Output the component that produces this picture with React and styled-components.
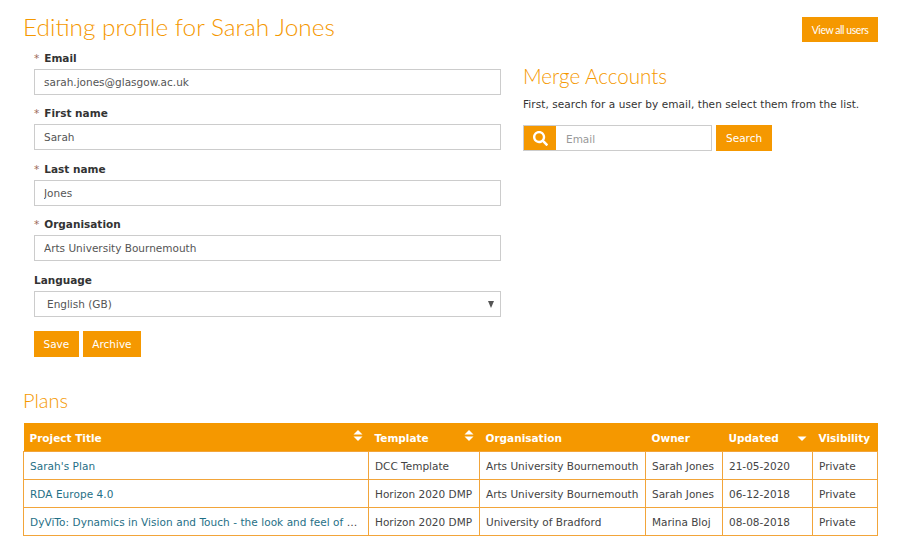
import React from 'react'
import styled, { createGlobalStyle } from 'styled-components'
import { FaSearch } from 'react-icons/fa'

const orange = '#f59800'

const GlobalStyle = createGlobalStyle`
  html, body {
    margin: 0;
    padding: 0;
    background: #fff;
  }
  body {
    font-family: "DejaVu Sans", Verdana, sans-serif;
    font-size: 10.5px;
    color: #333;
  }
`

const Page = styled.div`
  width: 855px;
  padding: 11px 0 0 23px;
`

const TopBar = styled.div`
  display: flex;
  justify-content: space-between;
  align-items: flex-start;
  height: 37px;
`

const Title = styled.h1`
  margin: 0;
  font-family: Lato, sans-serif;
  font-weight: 300;
  font-size: 24.4px;
  line-height: 32px;
  color: ${orange};
`

const Button = styled.button`
  height: 26px;
  padding: 0 10px;
  border: 0;
  background: ${orange};
  color: #fff;
  font-family: inherit;
  font-size: 10.5px;
`

const FormButton = styled(Button)`
  padding: 0 9.5px;
`

const ViewAll = styled(Button)`
  margin-top: 6px;
  width: 76px;
  height: 25px;
  padding: 0;
  font-family: Lato, sans-serif;
  font-weight: 400;
  font-size: 10.5px;
  letter-spacing: -0.45px;
`

const Columns = styled.div`
  display: grid;
  grid-template-columns: 478px 1fr;
  column-gap: 11px;
  padding-left: 11px;
`

const Form = styled.form`
  display: flex;
  flex-direction: column;
`

const Field = styled.div`
  height: 55.4px;
`

const Label = styled.label`
  display: block;
  height: 21px;
  line-height: 20px;
  font-weight: 700;
  color: #333;
`

const Star = styled.span`
  font-weight: 400;
  color: #9a6a5a;
  margin-right: 5px;
`

const inputBox = `
  display: block;
  box-sizing: border-box;
  width: 467px;
  height: 26px;
  border: 1px solid #ccc;
  background: #fff;
  font-family: inherit;
  font-size: 10.5px;
  color: #555;
`

const TextInput = styled.input`
  ${inputBox}
  padding: 0 9px;
`

const SelectWrap = styled.div`
  ${inputBox}
  position: relative;
  line-height: 24px;
  padding-left: 12px;
`

const Caret = styled.span`
  position: absolute;
  right: 6px;
  top: 9px;
  width: 0;
  height: 0;
  border-left: 3px solid transparent;
  border-right: 3px solid transparent;
  border-top: 7px solid #555;
`

const Actions = styled.div`
  display: flex;
  gap: 4px;
  margin-top: 6px;
`

const MergePanel = styled.div`
  padding-top: 14px;
`

const MergeTitle = styled.h2`
  margin: 0;
  font-family: Lato, sans-serif;
  font-weight: 300;
  font-size: 20.6px;
  line-height: 28px;
  color: ${orange};
`

const Hint = styled.p`
  margin: 6px 0 0;
  line-height: 16px;
  white-space: nowrap;
  letter-spacing: 0.06px;
  color: #333;
`

const SearchRow = styled.div`
  display: flex;
  gap: 4px;
  margin-top: 13px;
`

const SearchGroup = styled.div`
  display: flex;
  box-sizing: border-box;
  width: 189px;
  height: 26px;
  border: 1px solid #ccc;
`

const SearchIcon = styled.span`
  display: flex;
  align-items: center;
  justify-content: center;
  width: 32px;
  background: ${orange};
  color: #fff;
  font-size: 15px;
`

const SearchInput = styled.input`
  flex: 1;
  min-width: 0;
  border: 0;
  padding: 1px 10px 0;
  font-family: inherit;
  font-size: 10.5px;
  &::placeholder {
    color: #999;
  }
`

const PlansTitle = styled.h2`
  margin: 29px 0 0;
  font-family: Lato, sans-serif;
  font-weight: 300;
  font-size: 20px;
  line-height: 28px;
  color: ${orange};
`

const Table = styled.table`
  width: 854px;
  margin-top: 9px;
  table-layout: fixed;
  border-collapse: collapse;
`

const Th = styled.th`
  position: relative;
  height: 26px;
  padding: 2px 6px 0;
  background: ${orange};
  color: #fff;
  text-align: left;
  font-weight: 700;
  font-size: 10.5px;
`

const Td = styled.td`
  height: 26px;
  padding: 1px 6px 0;
  border: 1px solid #f2a53a;
  white-space: nowrap;
  overflow: hidden;
  text-overflow: ellipsis;
  color: #444;
`

const PlanLink = styled.a`
  color: #1f6f86;
  text-decoration: none;
  letter-spacing: 0.05px;
`

const SortIcon = styled.svg`
  position: absolute;
  right: 6px;
  top: 7px;
  width: 10px;
  height: 12px;
  fill: #fff;
`

const columns = [
  { title: 'Project Title', width: 345, sort: 'both' },
  { title: 'Template', width: 111, sort: 'both' },
  { title: 'Organisation', width: 166 },
  { title: 'Owner', width: 77 },
  { title: 'Updated', width: 90, sort: 'down' },
  { title: 'Visibility', width: 65 },
]

const plans = [
  ["Sarah's Plan", 'DCC Template', 'Arts University Bournemouth', 'Sarah Jones', '21-05-2020', 'Private'],
  ['RDA Europe 4.0', 'Horizon 2020 DMP', 'Arts University Bournemouth', 'Sarah Jones', '06-12-2018', 'Private'],
  ['DyViTo: Dynamics in Vision and Touch - the look and feel of stuff', 'Horizon 2020 DMP', 'University of Bradford', 'Marina Bloj', '08-08-2018', 'Private'],
]

const fields = [
  { label: 'Email', value: 'sarah.jones@glasgow.ac.uk' },
  { label: 'First name', value: 'Sarah' },
  { label: 'Last name', value: 'Jones' },
  { label: 'Organisation', value: 'Arts University Bournemouth' },
]

const Sort = ({ type }) => (
  <SortIcon viewBox="0 0 9 12">
    {type === 'both' && <path d="M4.5 0 L9 4.5 H0 Z" />}
    <path d="M0 6.5 H9 L4.5 11 Z" />
  </SortIcon>
)

const App = () => {
  return (
    <Page>
      <GlobalStyle />
      <TopBar>
        <Title>Editing profile for Sarah Jones</Title>
        <ViewAll>View all users</ViewAll>
      </TopBar>
      <Columns>
        <Form>
          {fields.map(f => (
            <Field key={f.label}>
              <Label><Star>*</Star>{f.label}</Label>
              <TextInput defaultValue={f.value} />
            </Field>
          ))}
          <Field>
            <Label>Language</Label>
            <SelectWrap>English (GB)<Caret /></SelectWrap>
          </Field>
          <Actions>
            <FormButton>Save</FormButton>
            <FormButton>Archive</FormButton>
          </Actions>
        </Form>
        <MergePanel>
          <MergeTitle>Merge Accounts</MergeTitle>
          <Hint>First, search for a user by email, then select them from the list.</Hint>
          <SearchRow>
            <SearchGroup>
              <SearchIcon><FaSearch /></SearchIcon>
              <SearchInput placeholder="Email" />
            </SearchGroup>
            <Button>Search</Button>
          </SearchRow>
        </MergePanel>
      </Columns>
      <PlansTitle>Plans</PlansTitle>
      <Table>
        <colgroup>
          {columns.map(c => <col key={c.title} width={c.width} />)}
        </colgroup>
        <thead>
          <tr>
            {columns.map(c => (
              <Th key={c.title}>{c.title}{c.sort && <Sort type={c.sort} />}</Th>
            ))}
          </tr>
        </thead>
        <tbody>
          {plans.map(row => (
            <tr key={row[0]}>
              {row.map((cell, i) => (
                <Td key={i}>{i === 0 ? <PlanLink href="#">{cell}</PlanLink> : cell}</Td>
              ))}
            </tr>
          ))}
        </tbody>
      </Table>
    </Page>
  )
}

export default App
